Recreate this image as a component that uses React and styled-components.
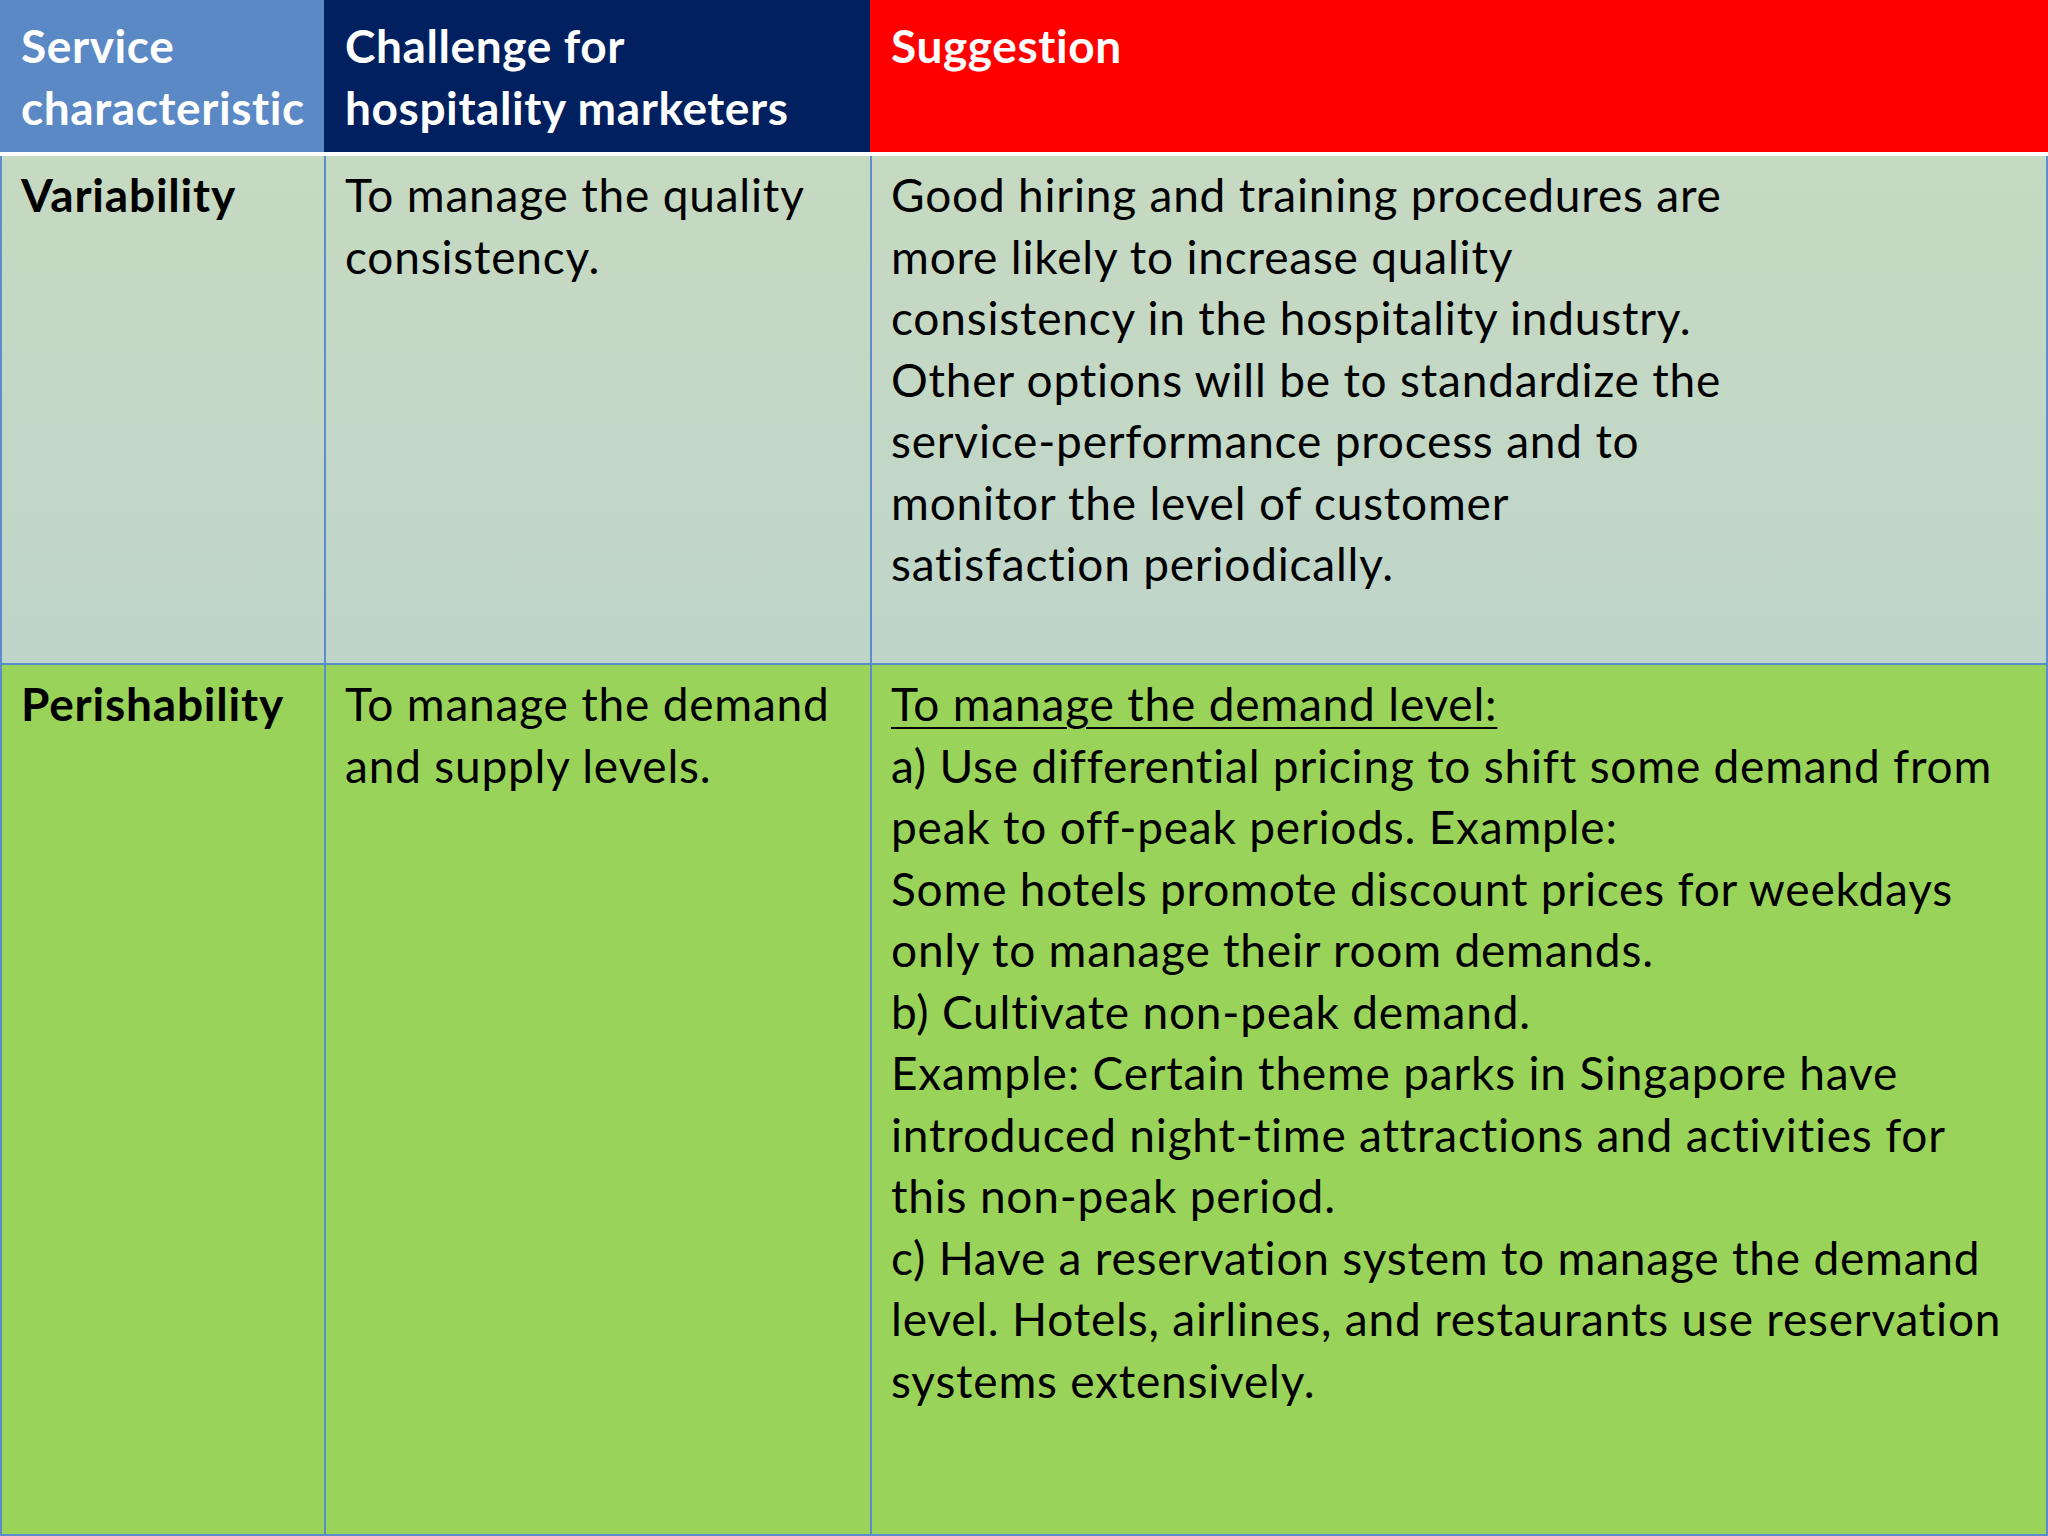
import React from "react";
import styled, { createGlobalStyle } from "styled-components";

const GlobalStyle = createGlobalStyle`
  html, body {
    margin: 0;
    padding: 0;
    background: #ffffff;
  }
  * { box-sizing: border-box; }
`;

/* ---------------- TABLE ---------------- */
const Table = styled.div`
  width: 2048px;
  height: 1536px;
  display: flex;
  flex-direction: column;
  font-family: "Lato", "Noto Sans", sans-serif;
  font-size: 46px;
  line-height: 61.5px;
  color: #000;
  overflow: hidden;
`;

const columns = "324px 546px 1fr";

const HeadRow = styled.div`
  display: grid;
  grid-template-columns: ${columns};
  height: 156px;
  border-bottom: 4px solid #ffffff;
`;

const HeadCell = styled.div`
  background: ${(p) => p.$bg};
  color: #ffffff;
  font-weight: 700;
  padding: 15px 0 0 21px;
  white-space: nowrap;
  letter-spacing: 0.6px;
`;

const BodyRow = styled.div`
  display: grid;
  grid-template-columns: ${columns};
  height: ${(p) => p.$height}px;
  background: ${(p) => p.$bg};
  border-bottom: 2px solid #5b8ccb;
`;

const Cell = styled.div`
  border-left: 2px solid #5b8ccb;
  padding: 8px 0 0 19px;
  font-weight: ${(p) => (p.$bold ? 700 : 400)};
  letter-spacing: ${(p) => (p.$bold ? "0.8px" : "0.8px")};

  &:last-child {
    border-right: 2px solid #5b8ccb;
  }
`;

const Line = styled.div`
  white-space: nowrap;
  text-decoration: ${(p) => (p.$underline ? "underline" : "none")};
  text-decoration-thickness: 2px;
  text-underline-offset: 6px;
`;

const rows = [
  {
    bg: "linear-gradient(180deg, #c6d9c1 0%, #c2d7c6 60%, #bfd5ca 100%)",
    height: 509,
    name: "Variability",
    challenge: ["To manage the quality", "consistency."],
    suggestion: [
      "Good hiring and training procedures are",
      "more likely to increase quality",
      "consistency in the hospitality industry.",
      "Other options will be to standardize the",
      "service-performance process and to",
      "monitor the level of customer",
      "satisfaction periodically.",
    ],
  },
  {
    bg: "#99d35a",
    height: 871,
    name: "Perishability",
    challenge: ["To manage the demand", "and supply levels."],
    suggestion: [
      { text: "To manage the demand level:", underline: true },
      "a) Use differential pricing to shift some demand from",
      "peak to off-peak periods. Example:",
      "Some hotels promote discount prices for weekdays",
      "only to manage their room demands.",
      "b) Cultivate non-peak demand.",
      "Example: Certain theme parks in Singapore have",
      "introduced night-time attractions and activities for",
      "this non-peak period.",
      "c) Have a reservation system to manage the demand",
      "level. Hotels, airlines, and restaurants use reservation",
      "systems extensively.",
    ],
  },
];

function Lines({ items }) {
  return items.map((item, i) => {
    const line = typeof item === "string" ? { text: item } : item;
    return (
      <Line key={i} $underline={line.underline}>
        {line.text}
      </Line>
    );
  });
}

export default function App() {
  return (
    <>
      <GlobalStyle />
      <Table>
        <HeadRow>
          <HeadCell $bg="#5a89c5">
            <Line>Service</Line>
            <Line>characteristic</Line>
          </HeadCell>
          <HeadCell $bg="#002060">
            <Line>Challenge for</Line>
            <Line>hospitality marketers</Line>
          </HeadCell>
          <HeadCell $bg="#ff0000">
            <Line>Suggestion</Line>
          </HeadCell>
        </HeadRow>

        {rows.map((row) => (
          <BodyRow key={row.name} $bg={row.bg} $height={row.height}>
            <Cell $bold>
              <Line>{row.name}</Line>
            </Cell>
            <Cell>
              <Lines items={row.challenge} />
            </Cell>
            <Cell>
              <Lines items={row.suggestion} />
            </Cell>
          </BodyRow>
        ))}
      </Table>
    </>
  );
}
